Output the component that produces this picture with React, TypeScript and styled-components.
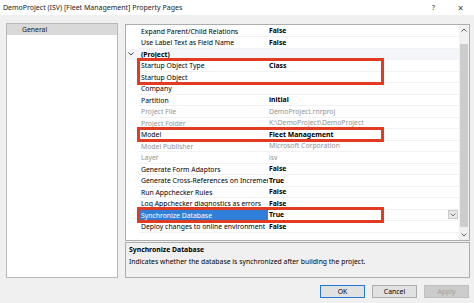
import React from 'react'
import styled, { createGlobalStyle } from 'styled-components'

const GlobalStyle = createGlobalStyle`
	html, body {
		margin: 0;
		padding: 0;
	}
	body {
		width: 474px;
		height: 303px;
		overflow: hidden;
		background: #f0f0f0;
		font-family: 'Noto Sans', 'Open Sans', sans-serif;
		font-size: 6.85px;
		color: #000;
	}
`

const ROW_H = 11.5

type Prop = {
	name: string
	value?: string
	readOnly?: boolean
	category?: boolean
	selected?: boolean
}

const properties: Prop[] = [
	{ name: 'Expand Parent/Child Relations', value: 'False' },
	{ name: 'Use Label Text as Field Name', value: 'False' },
	{ name: '(Project)', category: true },
	{ name: 'Startup Object Type', value: 'Class' },
	{ name: 'Startup Object', value: '' },
	{ name: 'Company', value: '' },
	{ name: 'Partition', value: 'initial' },
	{ name: 'Project File', value: 'DemoProject.rnrproj', readOnly: true },
	{ name: 'Project Folder', value: 'K:\\DemoProject\\DemoProject', readOnly: true },
	{ name: 'Model', value: 'Fleet Management' },
	{ name: 'Model Publisher', value: 'Microsoft Corporation', readOnly: true },
	{ name: 'Layer', value: 'isv', readOnly: true },
	{ name: 'Generate Form Adaptors', value: 'False' },
	{ name: 'Generate Cross-References on Incremer', value: 'True' },
	{ name: 'Run Appchecker Rules', value: 'False' },
	{ name: 'Log Appchecker diagnostics as errors', value: 'False' },
	{ name: 'Synchronize Database', value: 'True', selected: true },
	{ name: 'Deploy changes to online environment', value: 'False' },
]

// red annotation boxes drawn over the grid: first row index and row count
const marks = [
	{ from: 3, count: 2 },
	{ from: 9, count: 1 },
	{ from: 16, count: 1 },
]

const Chevron = ({ up, color = '#555' }: { up?: boolean; color?: string }) => (
	<svg width='6' height='4' viewBox='0 0 6 4'>
		<polyline
			points={up ? '0.5,3.5 3,1 5.5,3.5' : '0.5,0.5 3,3 5.5,0.5'}
			fill='none'
			stroke={color}
			strokeWidth='1'
		/>
	</svg>
)

const App = () => {
	return (
		<Window>
			<GlobalStyle />
			<TitleBar>
				<Title>DemoProject (ISV) [Fleet Management] Property Pages</Title>
				<TitleButton>?</TitleButton>
				<TitleButton $big>×</TitleButton>
			</TitleBar>
			<Body>
				<PageList>
					<PageItem $active>General</PageItem>
				</PageList>
				<RightColumn>
					<Grid>
						<Rows>
							{properties.map((p) => (
								<Row key={p.name} $category={p.category}>
									<Gutter>{p.category && <Chevron color='#444' />}</Gutter>
									<NameCell
										$category={p.category}
										$readOnly={p.readOnly}
										$selected={p.selected}
									>
										{p.name}
									</NameCell>
									{!p.category && (
										<ValueCell $readOnly={p.readOnly}>
											<ValueText>{p.value}</ValueText>
											{p.selected && (
												<DropButton>
													<Chevron color='#777' />
												</DropButton>
											)}
										</ValueCell>
									)}
								</Row>
							))}
							{marks.map((m) => (
								<Mark
									key={m.from}
									style={{
										top: m.from * ROW_H - 2,
										height: m.count * ROW_H + 4,
									}}
								/>
							))}
						</Rows>
						<ScrollBar>
							<ScrollArrow>
								<Chevron up color='#606060' />
							</ScrollArrow>
							<ScrollTrack>
								<Thumb />
							</ScrollTrack>
							<ScrollArrow>
								<Chevron color='#606060' />
							</ScrollArrow>
						</ScrollBar>
					</Grid>
					<Description>
						<DescTitle>Synchronize Database</DescTitle>
						<DescText>
							Indicates whether the database is synchronized after building the
							project.
						</DescText>
					</Description>
				</RightColumn>
			</Body>
			<Footer>
				<Button $default>OK</Button>
				<Button>Cancel</Button>
				<Button disabled>Apply</Button>
			</Footer>
		</Window>
	)
}

const Window = styled.div`
	width: 474px;
	height: 303px;
	display: flex;
	flex-direction: column;
	background: #f0f0f0;
`
const TitleBar = styled.div`
	height: 15px;
	flex: none;
	display: flex;
	align-items: center;
	background: #fff;
	padding-left: 3px;
	font-size: 7px;
	color: #1a1a1a;
`
const Title = styled.span`
	flex: 1;
	white-space: nowrap;
`
const TitleButton = styled.span<{ $big?: boolean }>`
	width: 27px;
	text-align: center;
	font-size: ${({ $big }) => ($big ? '10px' : '7px')};
	color: #444;
`
const Body = styled.div`
	display: flex;
	gap: 7px;
	padding: 8px 4px 0 6px;
	height: 255px;
	flex: none;
`
const PageList = styled.div`
	width: 112px;
	box-sizing: border-box;
	border: 1px solid #b9b9b9;
	background: #fff;
`
const PageItem = styled.div<{ $active?: boolean }>`
	height: 11px;
	line-height: 11px;
	padding-left: 15px;
	background: ${({ $active }) => ($active ? '#d9d9d9' : 'transparent')};
	color: #1a1a1a;
`
const RightColumn = styled.div`
	flex: 1;
	display: flex;
	flex-direction: column;
	gap: 1px;
	padding-top: 1px;
`
const Grid = styled.div`
	height: 218px;
	box-sizing: border-box;
	border: 1px solid #adadad;
	background: #fff;
	display: flex;
`
const Rows = styled.div`
	flex: 1;
	position: relative;
	padding-top: 0.5px;
`
const Row = styled.div<{ $category?: boolean }>`
	height: ${ROW_H}px;
	display: grid;
	grid-template-columns: 13px 129px 1fr;
	align-items: stretch;
	background: ${({ $category }) => ($category ? '#f4f5f8' : '#fff')};
`
const Gutter = styled.div`
	display: flex;
	align-items: center;
	padding-left: 2px;
`
const NameCell = styled.div<{
	$category?: boolean
	$readOnly?: boolean
	$selected?: boolean
}>`
	grid-column: ${({ $category }) => ($category ? '2 / 4' : 'auto')};
	padding-left: 2px;
	line-height: ${ROW_H}px;
	white-space: nowrap;
	overflow: hidden;
	font-weight: ${({ $category }) => ($category ? 700 : 400)};
	color: ${({ $readOnly, $selected }) =>
		$selected ? '#fff' : $readOnly ? '#939393' : '#000'};
	background: ${({ $selected }) => ($selected ? '#2f7fd9' : 'transparent')};
	border-bottom: 1px solid #f2f2f2;
	box-sizing: border-box;
`
const ValueCell = styled.div<{ $readOnly?: boolean }>`
	display: flex;
	align-items: center;
	padding-left: 1px;
	font-weight: ${({ $readOnly }) => ($readOnly ? 400 : 700)};
	color: ${({ $readOnly }) => ($readOnly ? '#939393' : '#000')};
	border-bottom: 1px solid #f2f2f2;
	box-sizing: border-box;
	white-space: nowrap;
	overflow: hidden;
`
const ValueText = styled.span`
	flex: 1;
	line-height: ${ROW_H}px;
`
const DropButton = styled.span`
	width: 10px;
	height: 9px;
	margin-right: 1px;
	box-sizing: border-box;
	border: 1px solid #c9c9c9;
	background: #e9e9e9;
	display: flex;
	align-items: center;
	justify-content: center;
`
const Mark = styled.div`
	position: absolute;
	left: 11px;
	width: 247px;
	box-sizing: border-box;
	border: 3px solid #e33b22;
	pointer-events: none;
`
const ScrollBar = styled.div`
	width: 10px;
	background: #f0f0f0;
	display: flex;
	flex-direction: column;
`
const ScrollArrow = styled.div`
	height: 10px;
	display: flex;
	align-items: center;
	justify-content: center;
`
const ScrollTrack = styled.div`
	flex: 1;
	display: flex;
	flex-direction: column;
	padding: 9px 1px 3px;
`
const Thumb = styled.div`
	flex: 1;
	background: #cdcdcd;
`
const Description = styled.div`
	height: 36px;
	box-sizing: border-box;
	border: 1px solid #adadad;
	background: #f0f0f0;
	padding: 1px 3px;
	line-height: 12px;
`
const DescTitle = styled.div`
	font-weight: 700;
`
const DescText = styled.div`
	white-space: nowrap;
`
const Footer = styled.div`
	display: flex;
	justify-content: flex-end;
	gap: 7px;
	padding: 7px 5px 0 0;
`
const Button = styled.button<{ $default?: boolean }>`
	width: 45px;
	height: 13px;
	padding: 0;
	box-sizing: border-box;
	font-family: inherit;
	font-size: 6.85px;
	line-height: 11px;
	color: #000;
	background: #e1e1e1;
	border: 1px solid ${({ $default }) => ($default ? '#1f7ad6' : '#adadad')};
	&:disabled {
		background: #cccccc;
		border-color: #bfbfbf;
		color: #a0a0a0;
	}
`

export default App
